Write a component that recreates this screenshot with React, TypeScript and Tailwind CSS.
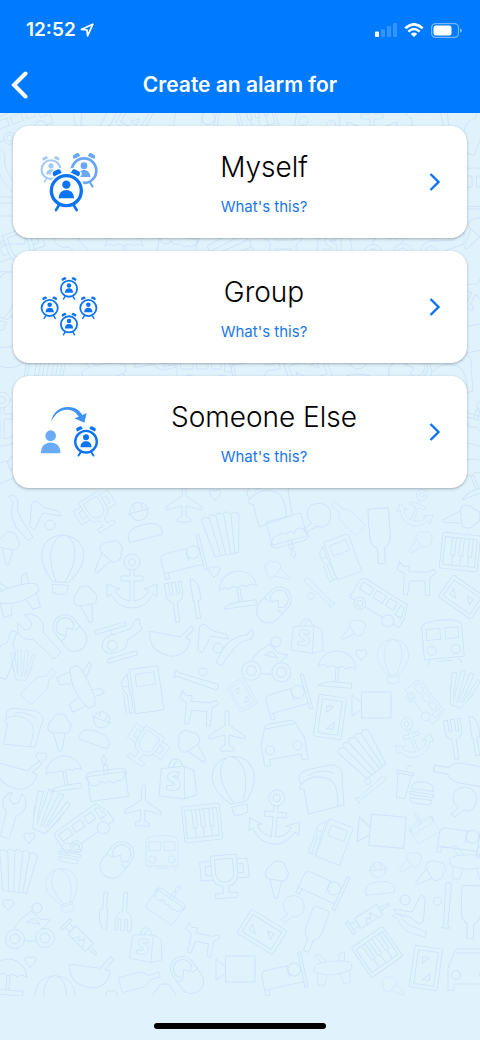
import React from 'react';

type AlarmOption = {
  title: string;
  icon: React.ReactNode;
};

type DoodleType = [name: string, x: number, y: number, rotate?: number, scale?: number];

const BLUE = '#0b74f5';

/* ---------- Alarm icons ---------- */

function Person({ x, y, scale = 1, fill = BLUE }: { x: number; y: number; scale?: number; fill?: string }) {
  return (
    <g transform={`translate(${x} ${y}) scale(${scale})`} fill={fill}>
      <circle cx="0" cy="-18" r="12.5" />
      <path d="M-23 23 C-23 6 -12 -2 0 -2 S23 6 23 23 Z" />
    </g>
  );
}

function Clock({
  x,
  y,
  scale = 1,
  color = BLUE,
  ring = 10,
}: {
  x: number;
  y: number;
  scale?: number;
  color?: string;
  ring?: number;
}) {
  return (
    <g transform={`translate(${x} ${y}) scale(${scale})`}>
      <circle cx="0" cy="0" r={50 - ring / 2} fill="none" stroke={color} strokeWidth={ring} />
      <path d="M-23 45 L-31 58 M23 45 L31 58" stroke={color} strokeWidth="8" strokeLinecap="round" />
      <path d="M-13 1 L-13 -6 Q-13 -13 -6 -13 L6 -13 Q13 -13 13 -6 L13 1 Z" fill={color} transform="translate(-26 -49) rotate(-26)" />
      <path d="M-13 1 L-13 -6 Q-13 -13 -6 -13 L6 -13 Q13 -13 13 -6 L13 1 Z" fill={color} transform="translate(26 -49) rotate(26)" />
      <Person x={0} y={0} fill={color} />
    </g>
  );
}

function MyselfIcon() {
  return (
    <svg viewBox="118 96 180 180" className="size-[60px] shrink-0" aria-hidden="true">
      <Clock x={154} y={149} scale={0.63} color="#a3c9f8" />
      <Clock x={253} y={152} scale={0.82} color="#69a6f4" />
      <circle cx="200" cy="212" r="55" fill="#fff" />
      <path d="M164 162 L180 154 M220 154 L236 162" stroke="#fff" strokeWidth="20" strokeLinecap="round" />
      <Clock x={200} y={212} />
    </svg>
  );
}

function GroupIcon() {
  return (
    <svg viewBox="117 82 180 180" className="size-[60px] shrink-0" aria-hidden="true">
      <Clock x={207} y={117} scale={0.54} ring={10} />
      <Clock x={149} y={175} scale={0.54} ring={10} />
      <Clock x={265} y={175} scale={0.54} ring={10} />
      <Clock x={207} y={224} scale={0.54} ring={10} />
    </svg>
  );
}

function SomeoneElseIcon() {
  return (
    <svg viewBox="117 99 180 180" className="size-[60px] shrink-0" aria-hidden="true">
      <path
        d="M153 158 C160 126 182 113 206 114 C227 115 240 125 247 138 L260 132 L253 161 L223 148 L236 143 C229 130 219 123 203 122 C182 121 165 134 153 158 Z"
        fill="#3d93f7"
      />
      <Person x={152} y={223} scale={1.28} fill="#6aaaf6" />
      <Clock x={258} y={218} scale={0.72} />
    </svg>
  );
}

/* ---------- Background doodles ---------- */

const ice = (
  <>
    <path d="M-7 1 Q-13 -1 -11 -7 Q-10 -11 -7 -12 Q-5 -19 1 -18 Q7 -18 8 -12 Q13 -9 11 -3 Q10 1 6 1 Z" />
    <path d="M-6 1 L1 19 Q3 20 4 18 L6 1" />
  </>
);

const shapes: Record<string, React.ReactNode> = {
  ice,
  balloon: (
    <>
      <path d="M-8 18 Q-21 4 -21 -9 Q-20 -27 0 -29 Q20 -27 21 -9 Q21 4 8 18 Z" />
      <path d="M-5 17 Q-13 0 -12 -12 Q-10 -25 -3 -28 M5 17 Q13 0 12 -12 Q10 -25 3 -28 M-8 21 H8 L7 29 Q0 32 -7 29 Z" />
    </>
  ),
  anchor: (
    <>
      <circle cx="0" cy="-20" r="8" />
      <circle cx="0" cy="-20" r="3.5" />
      <path d="M-2 -12 V-6 H-11 V-1 H-2 V19 Q-14 17 -17 8 L-12 7 L-25 2 V15 L-21 12 Q-14 26 0 26 Q14 26 21 12 L25 15 V2 L12 7 L17 8 Q14 17 2 19 V-1 H11 V-6 H2 V-12" />
    </>
  ),
  bed: (
    <>
      <path d="M-21 17 V-2 Q-21 -8 -14 -8 H6 V4 M-21 11 H19 M-17 11 V17 H-21 M19 17 V-19 H22 V17 Z" />
      <circle cx="12" cy="-3" r="6.5" />
    </>
  ),
  cutlery: (
    <>
      <path d="M-18 -20 V-8 Q-17 -1 -12 0 V20 H-8 V0 Q-2 -1 -1 -8 V-20 H-4 V-8 H-7 V-20 H-11 V-8 H-14 V-20 Z" />
      <path d="M8 -21 Q16 -19 16 -6 V1 H13 V19 H9 V1 H8 Z" />
    </>
  ),
  wrench: <path d="M-15 -21 L-8 -13 L-10 -7 L-16 -6 L-22 -13 Q-24 -3 -17 2 Q-11 5 -7 3 L14 23 L21 16 L3 -4 Q5 -13 -1 -18 Q-8 -24 -15 -21 Z" />,
  pill: (
    <>
      <rect x="-12" y="-20" width="24" height="40" rx="12" />
      <path d="M-9 -5 Q-10 -16 0 -17 Q10 -16 9 -5 L5 -1 L0 -6 L-5 0 Z M-12 1 H-6 M6 1 H12" />
    </>
  ),
  heli: (
    <>
      <path d="M-22 -16 H10 V-12 H-22 Z M-6 -12 V-7 M-14 10 Q-22 4 -17 -3 Q-13 -8 -3 -7 L13 -8 L20 -15 H24 V-4 L7 2 Q5 11 -4 11 Z M-18 19 Q-18 15 -14 15 H13 V19 Z" />
      <circle cx="-9" cy="3" r="5" />
    </>
  ),
  bowl: <path d="M-21 -7 L10 -4 L20 -16 L23 -13 L15 -3 L20 -2 Q19 14 3 16 Q-21 14 -21 -7 Z" />,
  swim: (
    <>
      <circle cx="5" cy="8" r="5" />
      <path d="M-13 -14 L-9 -16 L0 -9 L13 -6 L16 -1 L-2 -4 L-11 13 L-15 10 Z" />
    </>
  ),
  slide: <path d="M-12 -22 Q-5 -24 -3 -17 Q-5 -5 2 4 L12 19 L7 23 L-5 9 Q-12 -3 -8 -15 Z" />,
  trophy: (
    <>
      <path d="M-13 -22 H13 V-2 Q12 8 3 9 V16 H11 V21 H-11 V16 H-3 V9 Q-12 8 -13 -2 Z M-9 -18 H9 V-3 Q8 5 0 5 Q-8 5 -9 -3 Z" />
      <path d="M-13 -17 H-24 V2 H-12 M-13 -12 H-19 V-3 H-13 M13 -17 H24 V2 H12 M13 -12 H19 V-3 H13" />
    </>
  ),
  worker: (
    <>
      <circle cx="0" cy="-12" r="9" />
      <path d="M-11 -12 H11 M-4 -20 V-14 M4 -20 V-14 M-17 16 V10 Q-15 2 0 2 Q15 2 17 10 V16 Z" />
    </>
  ),
  plane: <path d="M-2 -19 Q0 -22 2 -19 V-6 L18 5 V8 L2 4 V14 L7 17 V20 H-7 V17 L-2 14 V4 L-18 8 V5 L-2 -6 Z" />,
  popcorn: (
    <path d="M-19 -16 L-12 22 H12 L19 -16 Q15 -21 11 -17 Q7 -23 3 -18 Q-1 -23 -5 -18 Q-9 -23 -12 -17 Q-17 -21 -19 -16 Z M-11 -17 L-6 22 M-4 -17 L-1 22 M4 -17 L4 22 M11 -16 L8 22" />
  ),
  fries: <path d="M-14 2 L-6 23 H7 L15 2 M-10 12 L-17 -13 L-12 -15 L-6 13 M-4 18 L-8 -19 L-3 -20 L0 18 M2 17 L3 -20 H8 L5 17 M7 15 L14 -16 L18 -14 L11 13" />,
  umbrella: <path d="M-19 0 Q-16 -16 0 -17 Q16 -16 19 0 Q14 -4 9 0 Q4 -4 0 0 Q-5 -4 -9 0 Q-14 -4 -19 0 Z M-1 0 V14 M2 0 V14 M-17 19 Q-12 14 0 14 H16 V19 Z" />,
  toast: (
    <path d="M-20 -4 Q-26 -15 -14 -18 L8 -23 Q22 -22 19 -9 L21 15 L-13 24 L-17 1 Q-24 0 -20 -4 Z M-20 -4 Q-11 -15 5 -10 Q16 -6 15 16 M-13 -13 Q0 -20 11 -15" />
  ),
  cake: (
    <path d="M-19 -6 H19 V19 H-19 Z M-19 -6 Q-19 4 -13 4 Q-8 4 -7 0 Q-3 5 2 1 Q7 6 10 2 Q18 4 19 -6 M-2 -6 V-15 H2 V-6 M0 -16 Q-5 -20 0 -25 Q4 -20 0 -16 M-19 -2 Q-24 -8 -15 -10 H15 Q23 -8 19 -2" />
  ),
  pump: (
    <path d="M-9 -23 H18 Q21 -23 21 -20 V24 H-9 Z M-4 -17 H16 V-4 H-4 Z M-9 22 H-15 V3 M-11 20 V2 M-15 3 Q-22 -4 -18 -13 L-12 -19 V3 M-19 2 V23 H-14 M-18 -6 H-12" />
  ),
  bottle: <path d="M-3 -24 H3 V-11 Q9 -7 9 0 V22 Q9 24 7 24 H-7 Q-9 24 -9 22 V0 Q-9 -7 -3 -11 Z" />,
  dog: <path d="M-19 -16 L-15 -11 L-9 -12 L-9 -6 H9 L16 -9 L18 -6 L12 -1 V17 H8 L7 3 H-8 L-10 17 H-14 V-4 L-21 -8 Z" />,
  van: (
    <>
      <path d="M-29 11 V-8 Q-29 -13 -24 -13 H24 L29 0 V11 H22 M-11 11 H10 M-29 11 H-23 M-25 -9 H-13 V-1 H-25 Z M-9 -9 H2 V-1 H-9 Z M6 -9 H15 V-1 H6 Z M19 -9 H23 L26 2 H19 Z" />
      <circle cx="-17" cy="11" r="6" />
      <circle cx="16" cy="11" r="6" />
      <circle cx="-17" cy="11" r="3" />
    </>
  ),
  train: (
    <>
      <path d="M-20 16 V-16 Q-19 -22 0 -22 Q19 -22 20 -16 V16 Z M-16 -14 H-2 V-3 H-16 Z M3 -14 H16 V-3 H3 Z M-14 16 L-17 22 M14 16 L17 22 M-8 19 H8" />
      <circle cx="-12" cy="8" r="4.5" />
      <circle cx="12" cy="8" r="4.5" />
    </>
  ),
  bag: (
    <path d="M-15 -11 L7 -13 L16 -9 L19 14 L7 18 L-17 15 Z M7 -13 V18 M-8 -12 Q-7 -21 0 -20 Q5 -19 5 -13 M-3 -12 Q-3 -17 1 -18 M2 -7 Q-9 -10 -9 -3 Q-9 1 -3 3 Q-1 6 -10 5 V9 Q3 12 3 4 Q3 -1 -4 -3 Q-4 -5 1 -3 Z" />
  ),
  frame: (
    <>
      <rect x="-14" y="-21" width="28" height="42" rx="2" />
      <path d="M-10 -17 H10 V17 H-10 Z M-5 -11 H2 L-4 -4 Z M5 5 V12 H-2 Z" />
    </>
  ),
  camera: <path d="M-10 -14 H19 V12 H-10 Z M-10 -3 L-20 -11 V10 L-10 3" />,
  bat: (
    <>
      <path d="M-3 -23 Q0 -26 3 -23 L2 18 L4 21 H-4 L-2 18 Z" />
      <circle cx="-10" cy="-5" r="4" />
    </>
  ),
  car: (
    <>
      <path d="M-22 20 V-2 L-15 -19 Q-14 -21 -11 -21 H11 Q14 -21 15 -19 L22 -2 V20 H16 V14 H-16 V20 Z M-14 -17 H14" />
      <circle cx="-14" cy="5" r="4.5" />
      <circle cx="14" cy="5" r="4.5" />
    </>
  ),
  piano: (
    <>
      <rect x="-19" y="-18" width="38" height="36" rx="2" />
      <path d="M-16 -14 H16 V14 H-16 Z M-9 -14 V4 H-5 V-14 M-7 4 V14 M-1 -14 V4 H3 V-14 M1 4 V14 M8 -14 V4 H12 V-14 M9 4 V14" />
    </>
  ),
  syringe: <path d="M-6 -12 H6 V14 H-6 Z M-2 14 L-1 24 H1 L2 14 M-3 -12 V-19 M3 -12 V-19 M-7 -19 H7 V-22 H-7 Z M-6 -5 L0 -2 L-3 1 L3 4 L-6 9" />,
  moto: (
    <>
      <circle cx="-15" cy="8" r="9.5" />
      <circle cx="15" cy="7" r="9.5" />
      <circle cx="-15" cy="8" r="5" />
      <circle cx="15" cy="7" r="5" />
      <circle cx="7" cy="-23" r="5" />
      <path d="M-16 -3 L-8 -13 L1 -20 L10 -12 L20 -11 L13 -3 M-5 10 H6 M-3 -9 L4 -13 L10 -7 Z" />
    </>
  ),
  burger: <path d="M-11 -3 Q-11 -11 0 -11 Q11 -11 11 -3 Z M-12 0 H12 V3 H-12 Z M-11 6 H11 Q11 11 7 11 H-7 Q-11 11 -11 6 Z" />,
  drink: <path d="M-7 -10 H8 L5 17 H-4 Z M-9 -13 H10 V-10 H-9 Z M0 -13 L3 -20 H6" />,
  table: (
    <path d="M-22 -3 Q-20 -8 0 -8 Q20 -8 22 -3 V3 Q10 8 0 8 Q-10 8 -22 3 Z M-19 5 V19 H-11 L-8 9 M19 5 V19 H11 L8 9 M-13 -7 L-20 -17 L-16 -18 L-7 -8 M7 -8 L9 -16 L15 -18 L14 -7" />
  ),
  pot: <path d="M-10 2 Q-14 -13 1 -14 Q15 -12 12 3 Q8 12 0 9 L-9 16 L-13 13 L-6 7 Z" />,
  heart: <path d="M0 6 Q-6 1 -5 -3 Q-2 -6 0 -3 Q4 -6 6 -2 Q6 2 0 6 Z" />,
};

const doodles: DoodleType[] = [
  // under the header and between the cards
  ['van', 22, 122, -20], ['balloon', 92, 118, 20], ['frame', 138, 112, 30], ['bed', 196, 119, 10], ['piano', 256, 114, -15],
  ['car', 318, 118, 8], ['anchor', 372, 120], ['toast', 428, 116], ['bottle', 474, 130, 20], ['slide', 8, 172],
  ['pump', 4, 220], ['train', 474, 190], ['ice', 476, 232, 40], ['trophy', 22, 252, -20], ['wrench', 76, 244],
  ['umbrella', 124, 246], ['cake', 178, 242, 10], ['popcorn', 232, 250, 70], ['dog', 284, 246], ['bag', 334, 244],
  ['moto', 388, 246], ['heli', 440, 248], ['balloon', 4, 300, 15], ['bowl', 8, 352, -10], ['plane', 476, 290, 30],
  ['camera', 470, 340, -10], ['piano', 44, 373, 10], ['table', 104, 372, -10], ['cutlery', 156, 372, 80], ['van', 206, 370],
  ['bottle', 256, 370, 80], ['frame', 308, 370, 70], ['worker', 358, 372], ['pill', 408, 370, 70], ['toast', 452, 376],
  ['anchor', 2, 420], ['bed', 4, 470, -20], ['cake', 474, 425, 15], ['umbrella', 472, 476, -20],
  // open area
  ['slide', 21, 518], ['swim', 45, 517], ['trophy', 98, 513, -32, 0.85], ['worker', 142, 523, -15], ['plane', 184, 502],
  ['popcorn', 223, 533, -10], ['toast', 270, 502, -5], ['pot', 318, 517, 5], ['bottle', 347, 517, -45, 0.8],
  ['anchor', 417, 508, 20, 0.7], ['ice', 462, 517, 85], ['heart', 215, 494], ['ice', 8, 548, 10, 0.9],
  ['balloon', 62, 564, 5], ['ice', 107, 556, 42], ['bed', 182, 558, -14], ['cake', 288, 535, 165, 0.95], ['pump', 338, 558, -20, 0.85],
  ['bottle', 380, 536, 176, 1.15], ['ice', 420, 542, 52, 0.75], ['piano', 460, 552, 6], ['anchor', 132, 582], ['heart', 214, 571],
  ['table', 17, 594, -16], ['ice', 86, 604, -8], ['cutlery', 185, 601, -8], ['umbrella', 238, 588, -8], ['ice', 277, 572, -55, 0.75],
  ['bat', 320, 593, -45, 0.85], ['dog', 418, 578, 2], ['pill', 274, 605, 42], ['van', 380, 603, 32], ['frame', 462, 597, 125, 0.95],
  ['wrench', 40, 636], ['pill', 70, 633, -38], ['heli', 120, 640, -16], ['bowl', 170, 640, 5], ['swim', 213, 640], ['slide', 235, 648, 70],
  ['bag', 307, 637, 3, 0.9], ['ice', 353, 630, 60, 0.75], ['train', 443, 642, -5], ['moto', 267, 664, 5], ['balloon', 393, 661, 0, 0.75],
  ['umbrella', 337, 668, 5], ['heart', 361, 654], ['bottle', 6, 654, 20], ['fries', 22, 664, 5, 0.7],
  ['bottle', 40, 685, 45, 0.85], ['table', 82, 687, 65], ['pump', 141, 690, -8, 0.95], ['bat', 195, 680, 108], ['frame', 242, 695, -30, 0.7],
  ['dog', 200, 708, 5], ['bed', 287, 698, -16], ['frame', 330, 717, 8], ['camera', 372, 706], ['van', 425, 702, 52, 0.75], ['fries', 462, 688, 20, 0.85],
  ['toast', 22, 728, 20, 0.9], ['ice', 59, 732, 3], ['worker', 98, 730, 20, 0.9], ['trophy', 145, 747, 35, 0.85], ['ice', 192, 747, -35],
  ['plane', 227, 731], ['car', 283, 743, -10], ['popcorn', 363, 754, -38], ['anchor', 412, 738, -20, 0.75], ['cutlery', 464, 738, -8],
  ['bowl', 17, 773, 10], ['heart', 41, 757], ['umbrella', 64, 772, -8, 0.95], ['cake', 107, 780, -8], ['bag', 177, 780, 0, 1.05],
  ['balloon', 235, 785, -12], ['toast', 322, 789, 0, 1.05], ['bat', 370, 790, 50, 0.8], ['drink', 403, 783, 10, 0.9], ['burger', 422, 793, 8],
  ['bottle', 460, 773, -80, 1.1], ['pot', 464, 801], ['wrench', 12, 815, 60, 0.9], ['fries', 48, 810, 25], ['plane', 143, 806, 2],
  ['piano', 202, 823, -6], ['anchor', 275, 818, 5], ['van', 84, 828, -35], ['heart', 29, 837], ['train', 162, 853, 0, 0.8],
  ['pump', 330, 840, 20, 0.85], ['camera', 382, 832, 5, 1.2], ['cake', 423, 827, -30, 0.65], ['bed', 460, 838, 8],
  ['popcorn', 17, 870, 6], ['pill', 117, 860, 38], ['burger', 70, 853, 10, 0.9], ['trophy', 225, 877, -5], ['ice', 276, 879, 8], ['bed', 322, 886, 25],
  ['worker', 379, 880, -6, 0.85], ['ice', 410, 862, 55, 0.7], ['ice', 430, 873, 60, 0.9], ['table', 470, 862, 0, 0.9],
  ['balloon', 63, 890, -15, 0.75], ['cutlery', 115, 911, 184, 0.95], ['cake', 168, 903, 35, 0.85], ['moto', 30, 931], ['syringe', 80, 938, -45, 0.95],
  ['bag', 146, 946, 5, 0.9], ['dog', 203, 940, 12, 0.9], ['pot', 293, 908, 0, 0.9], ['frame', 262, 932, 122], ['bottle', 314, 930, 200, 0.95],
  ['syringe', 368, 917, 238], ['swim', 410, 908, 180], ['slide', 410, 925, -35, 0.8], ['bat', 447, 907, 4], ['bottle', 471, 912, 182, 1.1],
  ['heart', 8, 904], ['umbrella', 8, 976, 5], ['heart', 30, 961], ['bowl', 90, 972, 2], ['bottle', 140, 980, 75, 0.85], ['pill', 187, 975, -35],
  ['camera', 236, 970], ['bed', 283, 975, -12], ['table', 333, 968, -5, 0.85], ['piano', 377, 952, -35], ['frame', 426, 968, 8],
  ['car', 470, 970], ['ice', 393, 987, -50, 0.7], ['balloon', 55, 1003, 0, 0.95], ['ice', 164, 1002], ['heart', 111, 995],
];

function Doodles() {
  return (
    <svg
      viewBox="0 113 480 883"
      preserveAspectRatio="xMidYMin slice"
      className="absolute inset-0 size-full"
      fill="none"
      stroke="#cfe4f7"
      strokeWidth="1"
      strokeLinejoin="round"
      strokeLinecap="round"
      aria-hidden="true"
    >
      {doodles.map(([name, x, y, rotate = 0, scale = 1], index) => (
        <g key={index} transform={`translate(${x} ${y}) rotate(${rotate}) scale(${scale})`}>
          {shapes[name]}
        </g>
      ))}
    </svg>
  );
}

/* ---------- Status bar ---------- */

function StatusBar() {
  return (
    <div className="flex h-14 items-center justify-between pt-1 pr-[18px] pl-[26px]">
      <div className="flex items-center gap-1">
        <span className="text-[19px] leading-6 font-semibold">12:52</span>
        <svg viewBox="0 0 14 14" className="size-[14px]" fill="none" stroke="currentColor" strokeWidth="1.7" strokeLinejoin="round" aria-hidden="true">
          <path d="M12.8 1.2 L1.3 6.4 L7 7 L7.6 12.8 Z" />
        </svg>
      </div>
      <div className="flex items-center gap-[7px]">
        <svg viewBox="0 0 22 14" className="h-[14px] w-[22px]" fill="currentColor" aria-hidden="true">
          <rect x="0" y="8.5" width="4" height="5.5" rx="1" />
          <g opacity="0.2">
            <rect x="6" y="6" width="4" height="8" rx="1" />
            <rect x="12" y="3" width="4" height="11" rx="1" />
            <rect x="18" y="0" width="4" height="14" rx="1" />
          </g>
        </svg>
        <svg viewBox="0 0 20 14" className="h-[14px] w-5" fill="none" stroke="currentColor" strokeWidth="2.6" aria-hidden="true">
          <path d="M1.3 5.2 Q10 -2.6 18.7 5.2" />
          <path d="M4.4 8.6 Q10 3.4 15.6 8.6" />
          <path d="M10 14 L6.8 10.9 Q10 8.3 13.2 10.9 Z" fill="currentColor" stroke="none" />
        </svg>
        <svg viewBox="0 0 31 15" className="h-[15px] w-[31px]" aria-hidden="true">
          <rect x="0.6" y="0.6" width="26.8" height="13.8" rx="4" fill="none" stroke="#fff" strokeOpacity="0.45" strokeWidth="1.2" />
          <rect x="2.5" y="2.5" width="18" height="10" rx="2.2" fill="#fff" />
          <path d="M29 5.2 Q31 6 31 7.5 Q31 9 29 9.8 Z" fill="#fff" fillOpacity="0.5" />
        </svg>
      </div>
    </div>
  );
}

/* ---------- Screen ---------- */

const options: AlarmOption[] = [
  { title: 'Myself', icon: <MyselfIcon /> },
  { title: 'Group', icon: <GroupIcon /> },
  { title: 'Someone Else', icon: <SomeoneElseIcon /> },
];

function OptionCard({ title, icon }: AlarmOption) {
  return (
    <li className="flex h-28 items-center rounded-2xl bg-white px-[26px] shadow-[0_1px_3px_rgba(0,0,0,0.3)]">
      {icon}
      <div className="flex flex-1 flex-col items-center gap-[10px]">
        <h2 className="text-[28px] leading-10 font-light text-black">{title}</h2>
        <button type="button" className="cursor-pointer text-[15px] leading-5 text-[#1a78ea]">
          What's this?
        </button>
      </div>
      <button type="button" aria-label={title} className="cursor-pointer text-[#0b74f5]">
        <svg viewBox="0 0 12 18" className="h-[18px] w-3" fill="none" stroke="currentColor" strokeWidth="2.4" aria-hidden="true">
          <path d="M1.5 1 L9.5 9 L1.5 17" />
        </svg>
      </button>
    </li>
  );
}

export default function App() {
  return (
    <div className="flex min-h-screen flex-col bg-[#e0f3fd] font-[Inter,'Liberation_Sans',sans-serif]">
      <header className="bg-[#007aff] text-white">
        <StatusBar />
        <div className="grid h-[57px] grid-cols-[40px_1fr_40px] items-center">
          <button type="button" aria-label="Back" className="cursor-pointer pl-[11px]">
            <svg viewBox="0 0 17 28" className="h-7 w-[17px]" fill="none" stroke="currentColor" strokeWidth="4" strokeLinecap="round" aria-hidden="true">
              <path d="M14.5 2.5 L3 14 L14.5 25.5" />
            </svg>
          </button>
          <h1 className="text-center text-[21px] leading-7 font-semibold">Create an alarm for</h1>
        </div>
      </header>

      <main className="relative flex-1 overflow-hidden">
        <Doodles />
        <ul className="relative flex flex-col gap-[13px] p-[13px]">
          {options.map((option) => (
            <OptionCard key={option.title} {...option} />
          ))}
        </ul>
      </main>

      {/* Home indicator */}
      <footer className="flex h-11 items-end justify-center pb-[11px]">
        <div className="h-[6px] w-[172px] rounded-full bg-black" />
      </footer>
    </div>
  );
}
